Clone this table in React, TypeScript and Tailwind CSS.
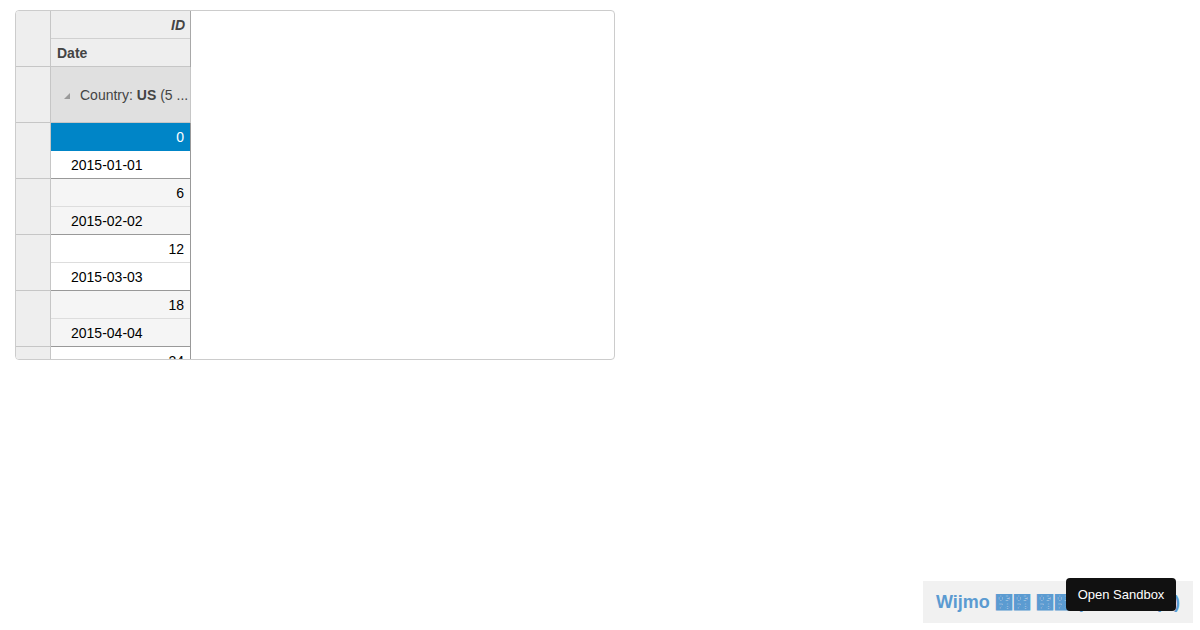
import React from 'react';

type Rec = { id: number; date: string };

const RECORDS: Rec[] = [
  { id: 0, date: '2015-01-01' },
  { id: 6, date: '2015-02-02' },
  { id: 12, date: '2015-03-03' },
  { id: 18, date: '2015-04-04' },
  { id: 24, date: '2015-05-05' },
];

const TOFU = '\u0378\u0378';

function RecordRow({ rec, index }: { rec: Rec; index: number }) {
  const selected = index === 0;
  const alt = index % 2 === 1;
  const bg = alt ? 'bg-[#f5f5f5]' : 'bg-white';
  return (
    <div className="flex shrink-0">
      {/* row header spans both lines of the record */}
      <div className="h-[56px] w-[35px] shrink-0 border-r border-b border-[#c6c6c6] bg-[#eeeeee]" />
      <div className="flex w-[140px] shrink-0 flex-col border-r border-b border-[#999999]">
        <div
          className={`flex h-[28px] items-center justify-end border-b px-[6px] pt-[2px] ${
            selected ? 'border-[#0085c7] bg-[#0085c7] text-white' : `border-[#dddddd] ${bg} text-black`
          }`}
        >
          {rec.id}
        </div>
        <div className={`flex h-[27px] items-center pl-[20px] pt-[2px] text-black ${bg}`}>{rec.date}</div>
      </div>
    </div>
  );
}

export default function App() {
  return (
    <div className="relative h-[630px] w-[1200px] bg-white font-['Liberation_Sans',Arial,sans-serif]">
      <div className="p-[10px_15px]">
        <div className="flex h-[350px] w-[600px] flex-col overflow-hidden rounded-[4px] border border-[#cccccc] text-[14px]">
          {/* column headers */}
          <div className="flex shrink-0">
            <div className="h-[56px] w-[35px] shrink-0 border-r border-b border-[#c6c6c6] bg-[#eeeeee]" />
            <div className="flex w-[140px] shrink-0 flex-col border-r border-[#a8a8a8] bg-[#eeeeee] font-bold text-[#444444]">
              <div className="flex h-[28px] items-center justify-end border-b border-[#d0d0d0] px-[5px] pt-[2px] italic">ID</div>
              <div className="flex h-[28px] items-center border-b border-[#c6c6c6] px-[6px] pt-[2px]">Date</div>
            </div>
          </div>

          {/* group row */}
          <div className="flex shrink-0">
            <div className="h-[56px] w-[35px] shrink-0 border-r border-b border-[#c6c6c6] bg-[#eeeeee]" />
            <div className="flex h-[56px] w-[140px] shrink-0 items-center gap-[10px] overflow-hidden whitespace-nowrap border-r border-b border-[#c6c6c6] bg-[#e0e0e0] pl-[13px] pt-[2px] text-[#444444]">
              <svg width="6" height="6" viewBox="0 0 6 6" className="shrink-0">
                <path d="M6 0 L6 6 L0 6 Z" fill="#9a9a9a" />
              </svg>
              <span>
                Country: <b>US</b> (5 ...
              </span>
            </div>
          </div>

          {RECORDS.map((rec, i) => (
            <RecordRow key={rec.id} rec={rec} index={i} />
          ))}
        </div>
      </div>

      {/* sandbox banner */}
      <div className="absolute left-[923px] top-[581px] flex h-[42px] w-[270px] items-center overflow-hidden whitespace-nowrap bg-[#f1f1f1] pl-[13px] text-[18px] font-bold text-[#5b9bd1]">
        Wijmo <span className="mx-[5px] font-['DejaVu_Sans']">{TOFU}</span>
        <span className="font-['DejaVu_Sans']">{TOFU}</span>&nbsp;(JavaScript)
      </div>
      <div className="absolute left-[1066px] top-[578px] flex h-[33px] w-[110px] items-center justify-center rounded-[4px] bg-[#111111] text-[13px] text-white">
        Open Sandbox
      </div>
    </div>
  );
}
